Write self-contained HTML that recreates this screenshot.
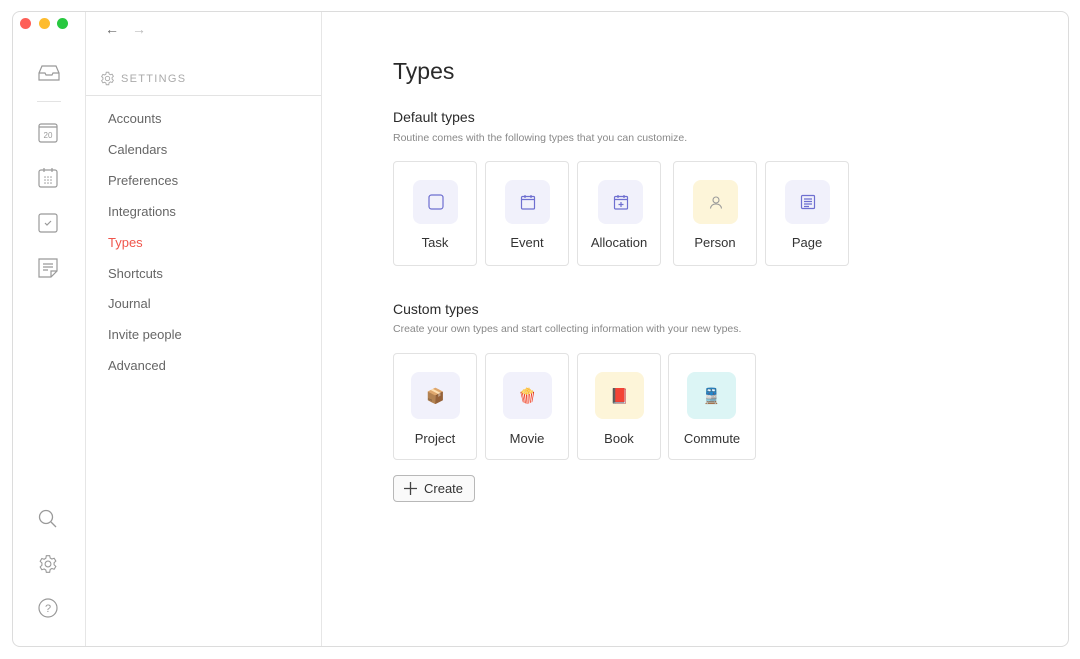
<!DOCTYPE html>
<html><head><meta charset="utf-8"><style>
*{box-sizing:border-box;margin:0;padding:0}
body{width:1080px;height:659px;background:#fff;font-family:"Liberation Sans",sans-serif;position:relative;overflow:hidden}
.win{position:absolute;left:12px;top:11px;width:1057px;height:636px;border:1px solid #dcdcdc;border-radius:8px;overflow:hidden;background:#fff}
.side{position:absolute;left:0;top:0;width:73px;height:100%;border-right:1px solid #e6e6e6}
.dot{position:absolute;top:6px;width:11px;height:11px;border-radius:50%}
.set{position:absolute;left:73px;top:0;width:236px;height:100%;border-right:1px solid #e6e6e6}
.ico{position:absolute;left:25px}
.nav{position:absolute;left:22px;font-size:13px;color:#666}
.main{position:absolute;left:309px;top:0;right:0;height:100%}
.abs{position:absolute}
.card{position:absolute;border:1px solid #e2e2e2;border-radius:4px;text-align:center;font-size:13px;color:#333}
.ib{position:absolute;border-radius:8px;display:flex;align-items:center;justify-content:center}
.card span{position:absolute;left:0;right:0}
</style></head><body>
<div class="win">
<div class="side">
<div class="dot" style="left:7px;background:#fe5f57"></div>
<div class="dot" style="left:26px;background:#febc2e"></div>
<div class="dot" style="left:44px;background:#28c840"></div>
<svg class="ico" style="top:52px" width="22" height="18" viewBox="0 0 22 18" fill="none" stroke="#999" stroke-width="1.2"><path d="M1 9 L4 2 H18 L21 9 V16 H1 Z M1 9 H7 L8 11 H14 L15 9 H21"/></svg>
<div class="abs" style="left:24px;top:89px;width:24px;height:1px;background:#e3e3e3"></div>
<svg class="ico" style="top:111px" width="20" height="20" viewBox="0 0 20 20" fill="none" stroke="#999" stroke-width="1.2"><rect x="1" y="1" width="18" height="18" rx="2"/><path d="M1 4H19"/><text x="10" y="15" font-size="8" fill="#999" stroke="none" text-anchor="middle" font-family="Liberation Sans">20</text></svg>
<svg class="ico" style="top:156px" width="20" height="20" viewBox="0 0 20 20" fill="none" stroke="#999" stroke-width="1.2"><rect x="1" y="2" width="18" height="17" rx="2"/><path d="M6 0v4M14 0v4" /><g fill="#999" stroke="none"><circle cx="7" cy="9" r=".8"/><circle cx="10" cy="9" r=".8"/><circle cx="13" cy="9" r=".8"/><circle cx="7" cy="12" r=".8"/><circle cx="10" cy="12" r=".8"/><circle cx="13" cy="12" r=".8"/><circle cx="7" cy="15" r=".8"/><circle cx="10" cy="15" r=".8"/><circle cx="13" cy="15" r=".8"/></g></svg>
<svg class="ico" style="top:201px" width="20" height="20" viewBox="0 0 20 20" fill="none" stroke="#999" stroke-width="1.2"><rect x="1" y="1" width="18" height="18" rx="2"/><path d="M7 10l2 2 4-4"/></svg>
<svg class="ico" style="top:246px" width="20" height="20" viewBox="0 0 20 20" fill="none" stroke="#999" stroke-width="1.2"><path d="M1 1H19V13L13 19H1Z M13 19V13H19 M5 6H15 M5 9H15 M5 12H10"/></svg>
<svg class="ico" style="top:497px" width="20" height="20" viewBox="0 0 20 20" fill="none" stroke="#999" stroke-width="1.3"><circle cx="8" cy="8" r="6.5"/><path d="M13 13l5 5"/></svg>
<svg class="ico" style="top:542px" width="20" height="20" viewBox="0 0 24 24" fill="none" stroke="#999" stroke-width="1.3"><circle cx="12" cy="12" r="3.5"/><path d="M10 2h4l.6 2.8 2 1.2 2.8-.9 2 3.4-2.1 2v2.4l2.1 2-2 3.4-2.8-.9-2 1.2L14 22h-4l-.6-2.8-2-1.2-2.8.9-2-3.4 2.1-2V10.8L2.6 8.8l2-3.4 2.8.9 2-1.2Z"/></svg>
<svg class="ico" style="top:586px" width="20" height="20" viewBox="0 0 20 20" fill="none" stroke="#999" stroke-width="1.2"><circle cx="10" cy="10" r="9"/><text x="10" y="14" font-size="11" fill="#999" stroke="none" text-anchor="middle" font-family="Liberation Sans">?</text></svg>
</div>
<div class="set">
<div class="abs" style="left:19px;top:9px;font-size:14px;color:#666">←</div>
<div class="abs" style="left:46px;top:9px;font-size:14px;color:#bbb">→</div>
<svg class="abs" style="left:14px;top:59px" width="15" height="15" viewBox="0 0 24 24" fill="none" stroke="#aaa" stroke-width="1.5"><circle cx="12" cy="12" r="3.5"/><path d="M10 2h4l.6 2.8 2 1.2 2.8-.9 2 3.4-2.1 2v2.4l2.1 2-2 3.4-2.8-.9-2 1.2L14 22h-4l-.6-2.8-2-1.2-2.8.9-2-3.4 2.1-2V10.8L2.6 8.8l2-3.4 2.8.9 2-1.2Z"/></svg>
<div class="abs" style="left:35px;top:61px;font-size:11px;letter-spacing:1.3px;color:#aaa">SETTINGS</div>
<div class="abs" style="left:0;right:0;top:83px;height:1px;background:#e3e3e3"></div>
<div class="nav" style="top:99px">Accounts</div>
<div class="nav" style="top:130px">Calendars</div>
<div class="nav" style="top:161px">Preferences</div>
<div class="nav" style="top:192px">Integrations</div>
<div class="nav" style="top:223px;color:#f0554b">Types</div>
<div class="nav" style="top:254px">Shortcuts</div>
<div class="nav" style="top:284px">Journal</div>
<div class="nav" style="top:315px">Invite people</div>
<div class="nav" style="top:346px">Advanced</div>
</div>
<div class="main">
<div class="abs" style="left:71px;top:46px;font-size:23px;color:#2a2a2a">Types</div>
<div class="abs" style="left:71px;top:97px;font-size:14px;color:#2a2a2a">Default types</div>
<div class="abs" style="left:71px;top:120px;font-size:10.5px;color:#888">Routine comes with the following types that you can customize.</div>

<div class="card" style="left:71px;top:149px;width:84px;height:105px"><div class="ib" style="left:19px;top:18px;width:45px;height:44px;background:#f1f1fb"><svg width="16" height="16"><rect x="1" y="1" width="14" height="14" rx="2.5" fill="none" stroke="#6e6fd0" stroke-width="1.2"/></svg></div><span style="top:73px">Task</span></div>
<div class="card" style="left:163px;top:149px;width:84px;height:105px"><div class="ib" style="left:19px;top:18px;width:45px;height:44px;background:#f1f1fb"><svg width="16" height="16" fill="none" stroke="#6e6fd0" stroke-width="1.2"><rect x="1.5" y="2.5" width="13" height="12.5" rx="1"/><path d="M1.5 5.5H14.5M5 1v3M11 1v3"/></svg></div><span style="top:73px">Event</span></div>
<div class="card" style="left:255px;top:149px;width:84px;height:105px"><div class="ib" style="left:20px;top:18px;width:45px;height:44px;background:#f1f1fb"><svg width="16" height="16" fill="none" stroke="#6e6fd0" stroke-width="1.2"><rect x="1.5" y="2.5" width="13" height="12.5" rx="1"/><path d="M1.5 5.5H14.5M5 1v3M11 1v3M8 8v5M5.5 10.5h5"/></svg></div><span style="top:73px">Allocation</span></div>
<div class="card" style="left:351px;top:149px;width:84px;height:105px"><div class="ib" style="left:19px;top:18px;width:45px;height:44px;background:#fdf5d9"><svg width="14" height="14" fill="none" stroke="#999" stroke-width="1.1"><circle cx="7" cy="5" r="3"/><path d="M1.5 13.5C2 10 4.5 9 7 9s5 1 5.5 4.5"/></svg></div><span style="top:73px">Person</span></div>
<div class="card" style="left:443px;top:149px;width:84px;height:105px"><div class="ib" style="left:19px;top:18px;width:45px;height:44px;background:#f1f1fb"><svg width="16" height="16" fill="none" stroke="#6e6fd0" stroke-width="1.2"><rect x="1.5" y="1.5" width="13" height="13" rx="1"/><path d="M4 5h8M4 7.5h8M4 10h8M4 12.5h5"/></svg></div><span style="top:73px">Page</span></div>

<div class="abs" style="left:71px;top:289px;font-size:14px;color:#2a2a2a">Custom types</div>
<div class="abs" style="left:71px;top:311px;font-size:10.5px;color:#888">Create your own types and start collecting information with your new types.</div>

<div class="card" style="left:71px;top:341px;width:84px;height:107px"><div class="ib" style="left:17px;top:18px;width:49px;height:47px;background:#f1f1fb;font-size:15px">📦</div><span style="top:77px">Project</span></div>
<div class="card" style="left:163px;top:341px;width:84px;height:107px"><div class="ib" style="left:17px;top:18px;width:49px;height:47px;background:#f1f1fb;font-size:15px">🍿</div><span style="top:77px">Movie</span></div>
<div class="card" style="left:255px;top:341px;width:84px;height:107px"><div class="ib" style="left:17px;top:18px;width:49px;height:47px;background:#fdf5d9;font-size:15px">📕</div><span style="top:77px">Book</span></div>
<div class="card" style="left:346px;top:341px;width:88px;height:107px"><div class="ib" style="left:18px;top:18px;width:49px;height:47px;background:#dcf5f5;font-size:15px">🚆</div><span style="top:77px">Commute</span></div>

<div class="abs" style="left:71px;top:463px;width:82px;height:27px;border:1px solid #b8b8b8;border-radius:4px;background:#fafafa;font-size:13px;color:#333;line-height:25px;padding-left:30px">Create</div>
<svg class="abs" style="left:82px;top:470px" width="13" height="13" stroke="#444" stroke-width="1.3"><path d="M6.5 0v13M0 6.5h13"/></svg>
</div>
</div>
</body></html>
